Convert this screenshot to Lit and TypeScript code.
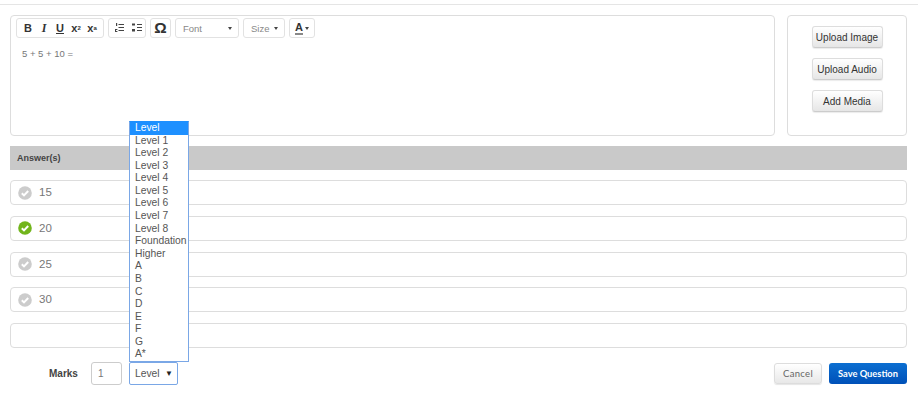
import { LitElement, html, css } from "lit";
import { customElement } from "lit/decorators.js";

const LEVELS = ["Level","Level 1","Level 2","Level 3","Level 4","Level 5","Level 6","Level 7","Level 8","Foundation","Higher","A","B","C","D","E","F","G","A*"];
const ANSWERS = [["15",false],["20",true],["25",false],["30",false]] as [string,boolean][];

const check = (on: boolean) => html`<svg class="chk" viewBox="0 0 14 14" width="14" height="14">
  <circle cx="7" cy="7" r="6.8" fill="${on ? "#72b51c" : "#cccccc"}"></circle>
  <path d="M3.8 7.2 L6 9.4 L10.2 5" fill="none" stroke="#fff" stroke-width="2"></path></svg>`;

@customElement("app-root")
export class AppRoot extends LitElement {
  static styles = css`
    :host { display: block; position: relative; width: 918px; height: 400px; overflow: hidden; background: #fff;
      font-family: "Liberation Sans", Arial, sans-serif; color: #555; box-sizing: border-box; }
    * { box-sizing: border-box; }
    .rule { height: 1px; background: #e5e5e5; margin-top: 4px; }
    .page { padding: 10px 11px 0 10px; width: 918px; display: flex; flex-direction: column; }
    .top { display: flex; gap: 12px; height: 121px; }
    .editor { flex: none; width: 765px; border: 1px solid #ddd; border-radius: 4px; padding: 2px 5px; }
    .toolbar { display: flex; gap: 4px; height: 20px; }
    .group { flex: none; display: flex; align-items: center; border: 1px solid #e2e2e2; border-radius: 3px; height: 20px; padding: 0 3px; color: #333; }
    .tb { display: flex; align-items: center; justify-content: center; font-size: 11px; font-weight: 700; width: 16px; height: 18px; color: #333; }
    .tb sub, .tb sup { font-size: 6px; line-height: 0; }
    .tb.i { font-family: "Liberation Serif", serif; font-style: italic; font-size: 12px; }
    .tb.u { text-decoration: underline; }
    .list-group { width: 38px; padding: 0; }
    .omega { width: 21px; justify-content: center; font-size: 15.5px; font-weight: 700; padding: 0; }
    .sel { justify-content: space-between; color: #888; font-size: 9.5px; padding: 0 6px 0 7px; }
    .font { width: 64px; }
    .size { width: 42px; }
    .color { width: 26px; justify-content: center; gap: 2px; font-weight: 700; font-size: 11px; padding: 0; }
    .color span { border-bottom: 2px solid #888; line-height: 11px; }
    .caret { width: 0; height: 0; border-left: 2px solid transparent; border-right: 2px solid transparent; border-top: 3px solid #444; }
    .text { font-size: 9.5px; color: #777; margin: 10px 0 0 6px; line-height: 11px; }
    .media { flex: none; width: 120px; border: 1px solid #ddd; border-radius: 4px; display: flex; flex-direction: column; align-items: center; gap: 10px; padding: 10px 0 0 0; }
    .mbtn { width: 71px; height: 22px; border: 1px solid #ddd; border-bottom-color: #ccc; border-radius: 3px; font-size: 10px; color: #333;
      display: flex; align-items: center; justify-content: center; background: linear-gradient(#fff, #e6e6e6); box-shadow: 0 1px 1px rgba(0,0,0,.08); }
    .bar { height: 24px; background: #c9c9c9; margin-top: 10px; font-size: 9px; font-weight: 700; color: #444; display: flex; align-items: center; padding-left: 7px; }
    .answers { display: flex; flex-direction: column; margin-top: 10px; gap: 10.75px; }
    .ans { height: 25px; border: 1px solid #ddd; border-radius: 4px; display: flex; align-items: center; padding-left: 7px; gap: 7px; font-size: 11.5px; color: #777; }
    .ans span { margin-top: -1px; }
    .foot { display: flex; align-items: center; height: 23px; margin-top: 14px; }
    .marks { font-size: 10px; font-weight: 700; color: #444; margin-left: 39px; width: 42px; }
    .num { width: 31px; height: 23px; border: 1px solid #ccc; border-radius: 3px; font-size: 10px; color: #777; display: flex; align-items: center; padding-left: 6px; }
    .lvl { width: 49px; height: 23px; margin-left: 7px; border: 1px solid #7aa7e6; border-radius: 2px; font-size: 10.3px; color: #555; display: flex; align-items: center; justify-content: space-between; padding: 0 4px 0 5px; }
    .lvl span { font-size: 8px; color: #222; }
    .spacer { flex: 1; }
    .cancel { width: 48px; height: 21px; margin-top: -1px; border: 1px solid #ddd; border-radius: 3px; font-family: Lato, sans-serif; font-size: 9.5px; letter-spacing: .3px; color: #666; display: flex; align-items: center; justify-content: center; background: linear-gradient(#fff, #e8e8e8); box-shadow: 0 1px 1px rgba(0,0,0,.1); margin-right: 7px; }
    .save { width: 78px; height: 21px; margin-top: -1px; border-radius: 3px; font-family: Lato, sans-serif; font-size: 9.3px; font-weight: 700; color: #fff; display: flex; align-items: center; justify-content: center; background: linear-gradient(#0b6fd1, #0050b8); }
    .list { position: absolute; left: 129px; top: 121px; width: 60px; height: 241px; background: #fff; border: 1px solid #7aa7e6; border-top-color: #1e90ff; }
    .opt { height: 12.58px; line-height: 12.5px; font-size: 10.3px; color: #555; padding-left: 5px; white-space: nowrap; }
    .opt.on { background: #1e90ff; color: #fff; }
  `;
  render() {
    return html`
      <div class="rule"></div>
      <div class="page">
        <div class="top">
          <div class="editor">
            <div class="toolbar">
              <div class="group">
                <div class="tb">B</div><div class="tb i">I</div><div class="tb u">U</div>
                <div class="tb">x<sub>2</sub></div><div class="tb">x<sup>a</sup></div>
              </div>
              <div class="group list-group">
                <svg width="36" height="18" viewBox="0 0 36 18">
                  <path stroke="#444" stroke-width="1" fill="none" d="M9.5 5.5H15M9.5 8.5H15M9.5 11.5H15M28 5.5H33M28 8.5H33M28 11.5H33"></path>
                  <path fill="#444" d="M7 4h1.2v3H7zM6 10h2.4v1H7v1h1.4v1H6zM23 4.5h3v2h-3zM23 10h3v2.5h-3z"></path>
                </svg>
              </div>
              <div class="group omega">Ω</div>
              <div class="group sel font">Font<i class="caret"></i></div>
              <div class="group sel size">Size<i class="caret"></i></div>
              <div class="group color"><span>A</span><i class="caret"></i></div>
            </div>
            <div class="text">5 + 5 + 10 =</div>
          </div>
          <div class="media">
            <div class="mbtn">Upload Image</div>
            <div class="mbtn">Upload Audio</div>
            <div class="mbtn">Add Media</div>
          </div>
        </div>
        <div class="bar">Answer(s)</div>
        <div class="answers">
          ${ANSWERS.map(([v,on]) => html`<div class="ans">${check(on)}<span>${v}</span></div>`)}
          <div class="ans"></div>
        </div>
        <div class="foot">
          <div class="marks">Marks</div>
          <div class="num">1</div>
          <div class="lvl">Level<span>▼</span></div>
          <div class="spacer"></div>
          <div class="cancel">Cancel</div>
          <div class="save">Save Question</div>
        </div>
      </div>
      <div class="list">
        ${LEVELS.map((l,i) => html`<div class="opt ${i===0?"on":""}">${l}</div>`)}
      </div>
    `;
  }
}
